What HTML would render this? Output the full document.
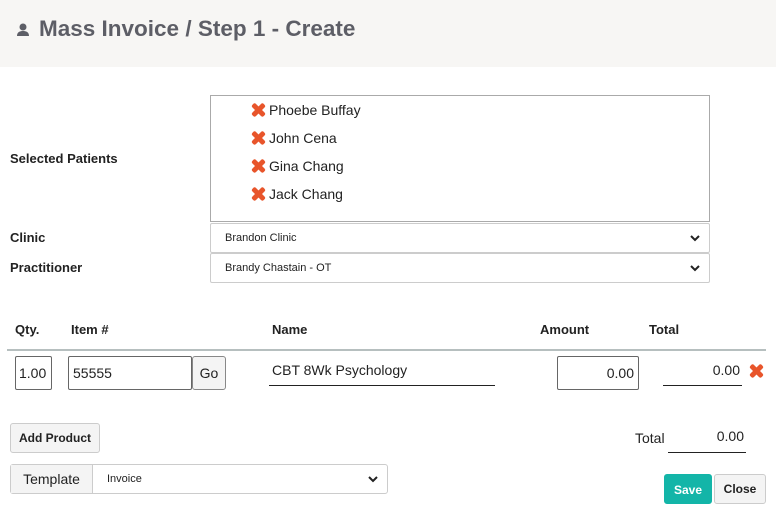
<!DOCTYPE html>
<html><head><style>
*{box-sizing:border-box;margin:0;padding:0}
body{width:776px;height:514px;background:#fff;font-family:"Liberation Sans",sans-serif;font-size:13px;color:#222;position:relative;overflow:hidden}
.hdr{position:absolute;left:0;top:0;width:776px;height:67px;background:#f7f6f4}
.hdr h1{position:absolute;left:39px;top:16px;font-size:22.5px;font-weight:bold;color:#5d5e66}
.a{position:absolute}
.b{font-weight:bold;font-size:13px}
.box{position:absolute;border:1px solid #aaa;background:#fff}
.sel{position:absolute;border:1px solid #ccc;border-radius:2px;background:#fff;font-size:11px;padding:8px 14px}
.x{display:inline-block;width:16px;height:16px;position:relative;vertical-align:-3px;margin-right:3px}
.x:before,.x:after{content:"";position:absolute;left:6px;top:0;width:5px;height:16px;background:#e8552b;border-radius:2px;transform:rotate(45deg)}
.x:after{transform:rotate(-45deg)}
.inp{position:absolute;border:1px solid #666;border-radius:2px;background:#fff;font-size:14px;padding:0 4px;line-height:32px;height:34px}
.ul{position:absolute;border-bottom:1px solid #222;font-size:14px}
.btn{position:absolute;border:1px solid #ccc;border-radius:3px;background:#f4f4f4;font-weight:bold;font-size:12px;text-align:center}
.chev{position:absolute;right:9px;top:11px}
</style></head><body>
<div class="hdr"><svg class="a" style="left:16px;top:23px" width="16" height="14" viewBox="0 0 16 14"><circle cx="7" cy="4" r="3.5" fill="#5d5e66"/><path d="M1 13c0-4 3-5 6-5s6 1 6 5z" fill="#5d5e66"/></svg><h1>Mass Invoice / Step 1 - Create</h1></div>
<div class="a b" style="left:10px;top:151px">Selected Patients</div>
<div class="box" style="left:210px;top:95px;width:500px;height:127px"></div>
<div class="a" style="left:250px;top:96px;font-size:14px;line-height:28px">
<div><span class="x"></span>Phoebe Buffay</div><div><span class="x"></span>John Cena</div><div><span class="x"></span>Gina Chang</div><div><span class="x"></span>Jack Chang</div></div>
<div class="a b" style="left:10px;top:230px">Clinic</div>
<div class="sel" style="left:210px;top:223px;width:500px;height:30px">Brandon Clinic<svg class="chev" width="10" height="7" viewBox="0 0 10 7"><path d="M1 1l4 4 4-4" stroke="#222" stroke-width="2" fill="none"/></svg></div>
<div class="a b" style="left:10px;top:260px">Practitioner</div>
<div class="sel" style="left:210px;top:253px;width:500px;height:30px">Brandy Chastain - OT<svg class="chev" width="10" height="7" viewBox="0 0 10 7"><path d="M1 1l4 4 4-4" stroke="#222" stroke-width="2" fill="none"/></svg></div>
<div class="a b" style="left:15px;top:322px">Qty.</div>
<div class="a b" style="left:71px;top:322px">Item #</div>
<div class="a b" style="left:272px;top:322px">Name</div>
<div class="a b" style="left:540px;top:322px">Amount</div>
<div class="a b" style="left:649px;top:322px">Total</div>
<div class="a" style="left:7px;top:349px;width:759px;height:2px;background:#b6bfbf"></div>
<div class="inp" style="left:15px;top:356px;width:37px;padding:0 3px">1.00</div>
<div class="inp" style="left:68px;top:356px;width:124px">55555</div>
<div class="btn" style="left:192px;top:356px;width:34px;height:34px;line-height:32px;font-weight:normal;font-size:14px;border-color:#888">Go</div>
<div class="ul" style="left:269px;top:362px;width:226px;height:24px;padding-left:3px">CBT 8Wk Psychology</div>
<div class="inp" style="left:557px;top:356px;width:82px;text-align:right">0.00</div>
<div class="ul" style="left:663px;top:362px;width:79px;height:24px;text-align:right;padding-right:2px">0.00</div>
<span class="x a" style="left:748px;top:363px"></span>
<div class="btn" style="left:10px;top:423px;width:90px;height:30px;line-height:28px">Add Product</div>
<div class="a" style="left:635px;top:430px;font-size:14px">Total</div>
<div class="ul" style="left:668px;top:428px;width:78px;height:25px;text-align:right;padding-right:2px">0.00</div>
<div class="a" style="left:10px;top:464px;width:378px;height:30px;border:1px solid #ccc;border-radius:3px;background:#fff">
<div style="position:absolute;left:0;top:0;width:82px;height:28px;background:#f4f4f4;border-right:1px solid #ccc;font-size:14px;line-height:28px;text-align:center">Template</div>
<div style="position:absolute;left:96px;top:8px;font-size:11px">Invoice</div><svg class="chev" style="top:11px" width="10" height="7" viewBox="0 0 10 7"><path d="M1 1l4 4 4-4" stroke="#222" stroke-width="2" fill="none"/></svg></div>
<div class="btn" style="left:664px;top:474px;width:48px;height:30px;line-height:30px;background:#13b5a8;border-color:#13b5a8;color:#fff">Save</div>
<div class="btn" style="left:714px;top:474px;width:52px;height:30px;line-height:28px;font-weight:bold">Close</div>
</body></html>
